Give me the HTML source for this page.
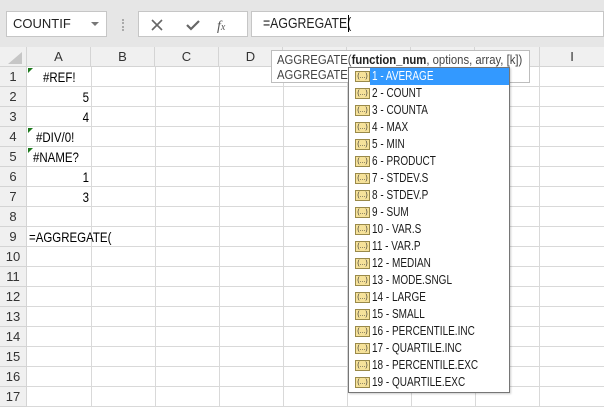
<!DOCTYPE html>
<html><head><style>
*{margin:0;padding:0;box-sizing:border-box}
body{width:604px;height:407px;overflow:hidden;background:#fff;font-family:"Liberation Sans",sans-serif;position:relative}
.tb{position:absolute;left:0;top:0;width:604px;height:47px;background:#e6e6e6}
.box{position:absolute;background:#fff;border:1px solid #c6c6c6}
.ch{position:absolute;top:47px;height:20px;background:#f0f0f0;border-right:1px solid #d4d4d4;border-bottom:1px solid #d4d4d4;font-size:13px;color:#333;text-align:center;line-height:20px}
.rh{position:absolute;left:0;width:27px;height:20px;background:#f0f0f0;border-right:1px solid #d4d4d4;border-bottom:1px solid #d4d4d4;font-size:13px;color:#333;text-align:center;line-height:20px}
.hl{position:absolute;left:27px;width:577px;height:1px;background:#d9d9d9}
.vl{position:absolute;top:67px;height:340px;width:1px;background:#d9d9d9}
.c{position:absolute;font-size:14px;color:#000;height:20px;line-height:20px;transform:scaleX(.82);transform-origin:left;white-space:nowrap}
.r{transform-origin:right}
.tri{position:absolute;width:0;height:0;border-top:5px solid #1e7b1e;border-right:5px solid transparent}
.dd{position:absolute;left:348px;top:67px;width:162px;height:326px;background:#fff;border:1px solid #767676;box-shadow:1px 1px 2px rgba(0,0,0,.2)}
.it{position:absolute;left:0;height:17px;width:160px;font-size:12.5px;line-height:17px;color:#1a1a1a}
.it span{position:absolute;left:23px;white-space:nowrap;transform:scaleX(.8);transform-origin:left}
.ic{position:absolute;left:6px;top:3px;width:15px;height:11px;background:#f6e29a;border:1px solid #9a8a4a;font-size:7px;line-height:9px;text-align:center;color:#333}
</style></head><body>
<div class="tb"></div>
<div class="box" style="left:6px;top:11px;width:101px;height:26px;font-size:13px;line-height:24px;padding-left:6px;color:#222">COUNTIF<span style="position:absolute;right:7px;top:10px;border-left:4px solid transparent;border-right:4px solid transparent;border-top:4px solid #777"></span></div>
<div style="position:absolute;left:122px;top:19px;width:2px;height:12px;border-left:2px dotted #aaa"></div>
<div class="box" style="left:138px;top:11px;width:110px;height:26px">
<svg width="110" height="26" style="position:absolute;left:0;top:0"><path d="M13 8l10 10M23 8l-10 10" stroke="#666" stroke-width="1.6" fill="none"/><path d="M48 13l4 4 8-8" stroke="#666" stroke-width="2.2" fill="none"/><text x="78" y="18" font-family="Liberation Serif" font-style="italic" font-size="14" fill="#555">f<tspan font-size="10">x</tspan></text></svg></div>
<div class="box" style="left:251px;top:11px;width:353px;height:26px;font-size:15px;line-height:24px;padding-left:11px;color:#222"><span style="display:inline-block;transform:scaleX(.82);transform-origin:left">=AGGREGATE(</span></div>
<div style="position:absolute;left:348px;top:15px;width:1px;height:17px;background:#000"></div>

<div class="ch" style="left:0;width:27px;background:#f0f0f0"><svg width="27" height="20" style="position:absolute;left:0;top:0"><path d="M8 17L22 17L22 5Z" fill="#c6c6c6"/></svg></div>
<div class="ch" style="left:27px;width:64px">A</div>
<div class="ch" style="left:91px;width:64px">B</div>
<div class="ch" style="left:155px;width:64px">C</div>
<div class="ch" style="left:219px;width:64px">D</div>
<div class="ch" style="left:283px;width:64px">E</div>
<div class="ch" style="left:347px;width:64px">F</div>
<div class="ch" style="left:411px;width:64px">G</div>
<div class="ch" style="left:475px;width:65px">H</div>
<div class="ch" style="left:540px;width:64px;border-right:none">I</div>

<div class="rh" style="top:67px">1</div><div class="rh" style="top:87px">2</div><div class="rh" style="top:107px">3</div><div class="rh" style="top:127px">4</div><div class="rh" style="top:147px">5</div><div class="rh" style="top:167px">6</div><div class="rh" style="top:187px">7</div><div class="rh" style="top:207px">8</div><div class="rh" style="top:227px">9</div><div class="rh" style="top:247px">10</div><div class="rh" style="top:267px">11</div><div class="rh" style="top:287px">12</div><div class="rh" style="top:307px">13</div><div class="rh" style="top:327px">14</div><div class="rh" style="top:347px">15</div><div class="rh" style="top:367px">16</div><div class="rh" style="top:387px">17</div>

<div class="hl" style="top:86px"></div><div class="hl" style="top:106px"></div><div class="hl" style="top:126px"></div><div class="hl" style="top:146px"></div><div class="hl" style="top:166px"></div><div class="hl" style="top:186px"></div><div class="hl" style="top:206px"></div><div class="hl" style="top:226px"></div><div class="hl" style="top:246px"></div><div class="hl" style="top:266px"></div><div class="hl" style="top:286px"></div><div class="hl" style="top:306px"></div><div class="hl" style="top:326px"></div><div class="hl" style="top:346px"></div><div class="hl" style="top:366px"></div><div class="hl" style="top:386px"></div><div class="hl" style="top:406px"></div>
<div class="vl" style="left:91px"></div><div class="vl" style="left:155px"></div><div class="vl" style="left:219px"></div><div class="vl" style="left:283px"></div><div class="vl" style="left:347px"></div><div class="vl" style="left:411px"></div><div class="vl" style="left:475px"></div><div class="vl" style="left:539px"></div>

<div class="c" style="left:43px;top:67px">#REF!</div>
<div class="c r" style="left:27px;width:62px;text-align:right;top:87px">5</div>
<div class="c r" style="left:27px;width:62px;text-align:right;top:107px">4</div>
<div class="c" style="left:36px;top:127px">#DIV/0!</div>
<div class="c" style="left:33px;top:147px">#NAME?</div>
<div class="c r" style="left:27px;width:62px;text-align:right;top:167px">1</div>
<div class="c r" style="left:27px;width:62px;text-align:right;top:187px">3</div>
<div class="c" style="left:29px;top:227px">=AGGREGATE(</div>
<div class="tri" style="left:28px;top:68px"></div>
<div class="tri" style="left:28px;top:128px"></div>
<div class="tri" style="left:28px;top:148px"></div>

<div style="position:absolute;left:271px;top:50px;width:259px;height:33px;background:#fff;border:1px solid #bdbdbd;font-size:13px;line-height:15px;padding:1px 0 0 5px;color:#444;white-space:nowrap"><div style="transform:scaleX(.87);transform-origin:left">AGGREGATE(<b style="color:#222">function_num</b>, options, array, [k])<br>AGGREGATE(function_num, ref1, [ref2], ...)</div></div>

<div class="dd">
<div class="it" style="top:0"><div style="position:absolute;left:21px;top:0;width:139px;height:17px;background:#3399ff"></div><div class="ic">(...)</div><span style="color:#fff">1 - AVERAGE</span></div>
<div class="it" style="top:17px"><div class="ic">(...)</div><span>2 - COUNT</span></div>
<div class="it" style="top:34px"><div class="ic">(...)</div><span>3 - COUNTA</span></div>
<div class="it" style="top:51px"><div class="ic">(...)</div><span>4 - MAX</span></div>
<div class="it" style="top:68px"><div class="ic">(...)</div><span>5 - MIN</span></div>
<div class="it" style="top:85px"><div class="ic">(...)</div><span>6 - PRODUCT</span></div>
<div class="it" style="top:102px"><div class="ic">(...)</div><span>7 - STDEV.S</span></div>
<div class="it" style="top:119px"><div class="ic">(...)</div><span>8 - STDEV.P</span></div>
<div class="it" style="top:136px"><div class="ic">(...)</div><span>9 - SUM</span></div>
<div class="it" style="top:153px"><div class="ic">(...)</div><span>10 - VAR.S</span></div>
<div class="it" style="top:170px"><div class="ic">(...)</div><span>11 - VAR.P</span></div>
<div class="it" style="top:187px"><div class="ic">(...)</div><span>12 - MEDIAN</span></div>
<div class="it" style="top:204px"><div class="ic">(...)</div><span>13 - MODE.SNGL</span></div>
<div class="it" style="top:221px"><div class="ic">(...)</div><span>14 - LARGE</span></div>
<div class="it" style="top:238px"><div class="ic">(...)</div><span>15 - SMALL</span></div>
<div class="it" style="top:255px"><div class="ic">(...)</div><span>16 - PERCENTILE.INC</span></div>
<div class="it" style="top:272px"><div class="ic">(...)</div><span>17 - QUARTILE.INC</span></div>
<div class="it" style="top:289px"><div class="ic">(...)</div><span>18 - PERCENTILE.EXC</span></div>
<div class="it" style="top:306px"><div class="ic">(...)</div><span>19 - QUARTILE.EXC</span></div>
</div>
</body></html>
